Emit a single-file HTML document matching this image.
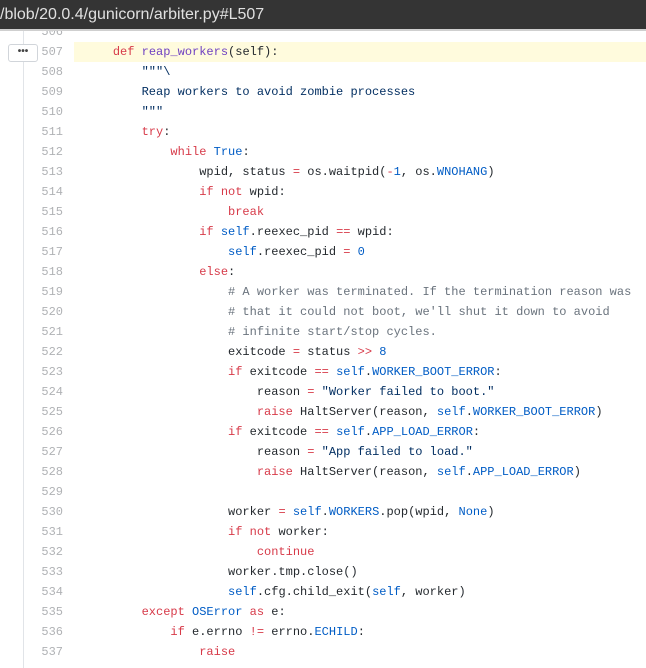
<!DOCTYPE html>
<html><head><meta charset="utf-8"><style>
body{margin:0;width:646px;height:668px;overflow:hidden;background:#fff;position:relative;font-family:"Liberation Mono",monospace;}
#hdr{position:absolute;left:0;top:0;width:646px;height:29px;background:#343434;color:#e0e0e0;font:16px "Liberation Sans",sans-serif;line-height:29px;z-index:3;white-space:nowrap;}
#sep{position:absolute;left:0;top:29px;width:646px;height:2px;background:#cfcfcf;z-index:3}
#vl{position:absolute;left:23px;top:31px;width:1px;height:637px;background:#e1e4e8}
#hl{position:absolute;left:74px;top:42px;width:572px;height:20px;background:#fffbdd}
#btn{position:absolute;left:8px;top:44px;width:28px;height:16px;border:1px solid #d1d5da;border-radius:3px;background:#fff;font:bold 10px "Liberation Sans",sans-serif;text-align:center;line-height:13px;color:#444;z-index:2}
.code{position:absolute;left:0;top:22px;width:646px;font-size:12px;line-height:20px;color:#24292e}
.r{height:20px;position:relative}
.n{position:absolute;left:30px;width:33px;text-align:right;color:#b0b2b5}
.c{position:absolute;left:84px;white-space:pre}
.k{color:#d73a49}.f{color:#6f42c1}.b{color:#005cc5}.s{color:#032f62}.m{color:#6a737d}
</style></head><body>
<div id="hdr">/blob/20.0.4/gunicorn/arbiter.py#L507</div><div id="sep"></div>
<div id="vl"></div><div id="hl"></div><div id="btn">•••</div>
<div class="code">
<div class="r"><span class="n">506</span><span class="c"></span></div>
<div class="r"><span class="n">507</span><span class="c">    <span class="k">def</span> <span class="f">reap_workers</span>(self):</span></div>
<div class="r"><span class="n">508</span><span class="c">        <span class="s">"""\</span></span></div>
<div class="r"><span class="n">509</span><span class="c"><span class="s">        Reap workers to avoid zombie processes</span></span></div>
<div class="r"><span class="n">510</span><span class="c"><span class="s">        """</span></span></div>
<div class="r"><span class="n">511</span><span class="c">        <span class="k">try</span>:</span></div>
<div class="r"><span class="n">512</span><span class="c">            <span class="k">while</span> <span class="b">True</span>:</span></div>
<div class="r"><span class="n">513</span><span class="c">                wpid, status <span class="k">=</span> os.waitpid(<span class="k">-</span><span class="b">1</span>, os.<span class="b">WNOHANG</span>)</span></div>
<div class="r"><span class="n">514</span><span class="c">                <span class="k">if not</span> wpid:</span></div>
<div class="r"><span class="n">515</span><span class="c">                    <span class="k">break</span></span></div>
<div class="r"><span class="n">516</span><span class="c">                <span class="k">if</span> <span class="b">self</span>.reexec_pid <span class="k">==</span> wpid:</span></div>
<div class="r"><span class="n">517</span><span class="c">                    <span class="b">self</span>.reexec_pid <span class="k">=</span> <span class="b">0</span></span></div>
<div class="r"><span class="n">518</span><span class="c">                <span class="k">else</span>:</span></div>
<div class="r"><span class="n">519</span><span class="c"><span class="m">                    # A worker was terminated. If the termination reason was</span></span></div>
<div class="r"><span class="n">520</span><span class="c"><span class="m">                    # that it could not boot, we'll shut it down to avoid</span></span></div>
<div class="r"><span class="n">521</span><span class="c"><span class="m">                    # infinite start/stop cycles.</span></span></div>
<div class="r"><span class="n">522</span><span class="c">                    exitcode <span class="k">=</span> status <span class="k">&gt;&gt;</span> <span class="b">8</span></span></div>
<div class="r"><span class="n">523</span><span class="c">                    <span class="k">if</span> exitcode <span class="k">==</span> <span class="b">self</span>.<span class="b">WORKER_BOOT_ERROR</span>:</span></div>
<div class="r"><span class="n">524</span><span class="c">                        reason <span class="k">=</span> <span class="s">"Worker failed to boot."</span></span></div>
<div class="r"><span class="n">525</span><span class="c">                        <span class="k">raise</span> HaltServer(reason, <span class="b">self</span>.<span class="b">WORKER_BOOT_ERROR</span>)</span></div>
<div class="r"><span class="n">526</span><span class="c">                    <span class="k">if</span> exitcode <span class="k">==</span> <span class="b">self</span>.<span class="b">APP_LOAD_ERROR</span>:</span></div>
<div class="r"><span class="n">527</span><span class="c">                        reason <span class="k">=</span> <span class="s">"App failed to load."</span></span></div>
<div class="r"><span class="n">528</span><span class="c">                        <span class="k">raise</span> HaltServer(reason, <span class="b">self</span>.<span class="b">APP_LOAD_ERROR</span>)</span></div>
<div class="r"><span class="n">529</span><span class="c"></span></div>
<div class="r"><span class="n">530</span><span class="c">                    worker <span class="k">=</span> <span class="b">self</span>.<span class="b">WORKERS</span>.pop(wpid, <span class="b">None</span>)</span></div>
<div class="r"><span class="n">531</span><span class="c">                    <span class="k">if not</span> worker:</span></div>
<div class="r"><span class="n">532</span><span class="c">                        <span class="k">continue</span></span></div>
<div class="r"><span class="n">533</span><span class="c">                    worker.tmp.close()</span></div>
<div class="r"><span class="n">534</span><span class="c">                    <span class="b">self</span>.cfg.child_exit(<span class="b">self</span>, worker)</span></div>
<div class="r"><span class="n">535</span><span class="c">        <span class="k">except</span> <span class="b">OSError</span> <span class="k">as</span> e:</span></div>
<div class="r"><span class="n">536</span><span class="c">            <span class="k">if</span> e.errno <span class="k">!=</span> errno.<span class="b">ECHILD</span>:</span></div>
<div class="r"><span class="n">537</span><span class="c">                <span class="k">raise</span></span></div>
</div>
</body></html>
